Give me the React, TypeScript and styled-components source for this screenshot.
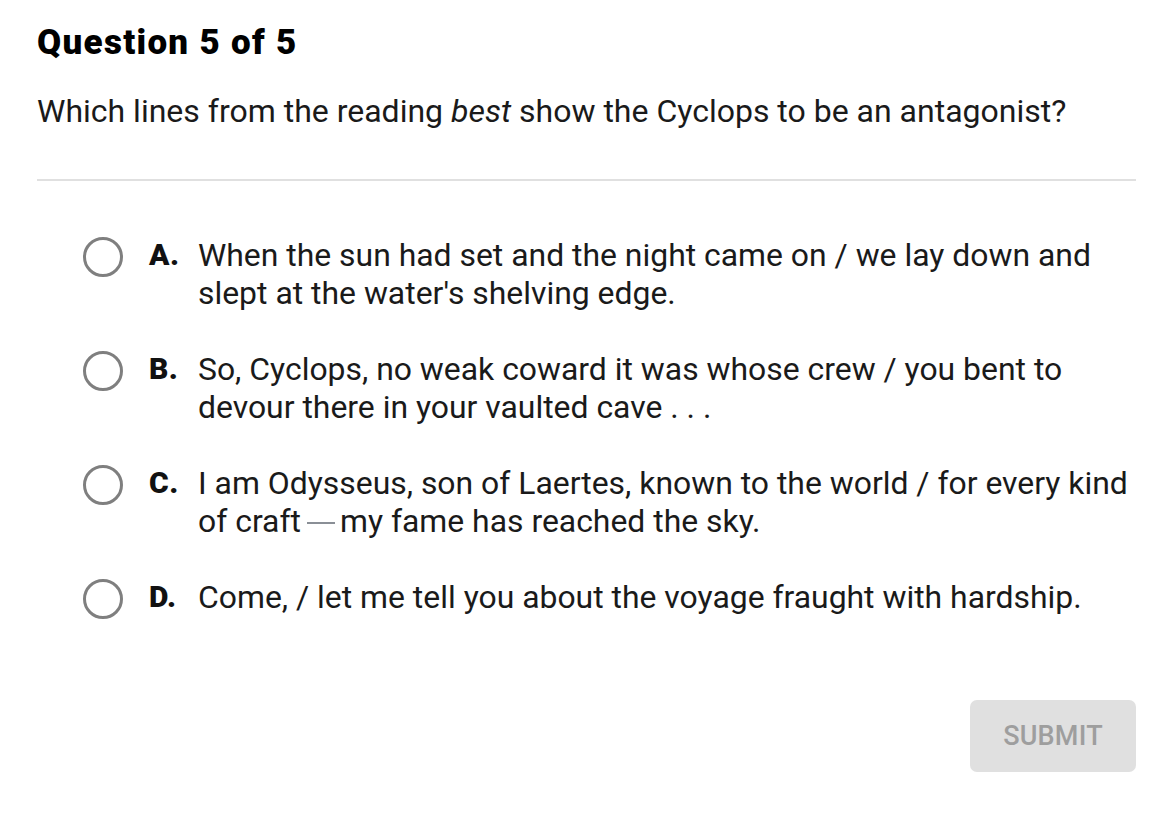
import React from "react";
import styled, { createGlobalStyle } from "styled-components";

const Global = createGlobalStyle`
  html, body { margin: 0; padding: 0; background: #fff; }
  body { font-family: Roboto, "Noto Sans", Arial, sans-serif; color: #1a1a1a; }
`;

const Page = styled.div`
  padding: 22px 34px 0 37px;
  display: flex;
  flex-direction: column;
`;

const Heading = styled.h1`
  margin: 0;
  font-size: 35px;
  font-weight: 900;
  letter-spacing: 1.3px;
  color: #000;
  line-height: 42px;
`;

const Prompt = styled.p`
  margin: 27px 0 0;
  font-size: 32px;
  line-height: 40px;
  color: #1a1a1a;
`;

const Divider = styled.hr`
  margin: 48px 0 0;
  border: none;
  height: 2px;
  background: #e0e0e0;
`;

const Options = styled.div`
  display: flex;
  flex-direction: column;
  gap: 38px;
  margin-top: 55px;
  padding-left: 46px;
`;

const Option = styled.label`
  display: flex;
  align-items: flex-start;
  cursor: pointer;
`;

const Radio = styled.span`
  flex: none;
  width: 34px;
  height: 34px;
  border: 3px solid #7f7f7f;
  border-radius: 50%;
  margin-top: 1px;
`;

const Letter = styled.span`
  flex: none;
  width: 49px;
  margin-left: 26px;
  font-weight: 900;
  font-size: 30px;
  line-height: 38px;
  letter-spacing: 0.5px;
  color: #111;
`;

const OptionText = styled.span`
  font-size: 31.9px;
  line-height: 38px;
  color: #1a1a1a;
`;

const Dash = styled.span`
  display: inline-block;
  width: 28px;
  height: 2px;
  background: #8a8f96;
  vertical-align: middle;
  margin: 0 5px 0 6px;
  position: relative;
  top: -1px;
`;

const Footer = styled.div`
  display: flex;
  justify-content: flex-end;
  margin-top: 81px;
`;

const Submit = styled.button`
  width: 166px;
  height: 72px;
  border: none;
  border-radius: 7px;
  background: #e0e0e0;
  color: #9e9e9e;
  font-family: Roboto, Arial, sans-serif;
  font-weight: 500;
  font-size: 27px;
  letter-spacing: 0.2px;
`;

const options: { letter: string; text: React.ReactNode }[] = [
  {
    letter: "A.",
    text: "When the sun had set and the night came on / we lay down and slept at the water's shelving edge.",
  },
  {
    letter: "B.",
    text: "So, Cyclops, no weak coward it was whose crew / you bent to devour there in your vaulted cave . . .",
  },
  {
    letter: "C.",
    text: (
      <>
        I am Odysseus, son of Laertes, known to the world / for every kind of craft
        <Dash />
        my fame has reached the sky.
      </>
    ),
  },
  {
    letter: "D.",
    text: "Come, / let me tell you about the voyage fraught with hardship.",
  },
];

export default function App() {
  return (
    <>
      <Global />
      <Page>
        <Heading>Question 5 of 5</Heading>
        <Prompt>
          Which lines from the reading <em>best</em> show the Cyclops to be an antagonist?
        </Prompt>
        <Divider />
        <Options>
          {options.map((o) => (
            <Option key={o.letter}>
              <Radio />
              <Letter>{o.letter}</Letter>
              <OptionText>{o.text}</OptionText>
            </Option>
          ))}
        </Options>
        <Footer>
          <Submit disabled>SUBMIT</Submit>
        </Footer>
      </Page>
    </>
  );
}
